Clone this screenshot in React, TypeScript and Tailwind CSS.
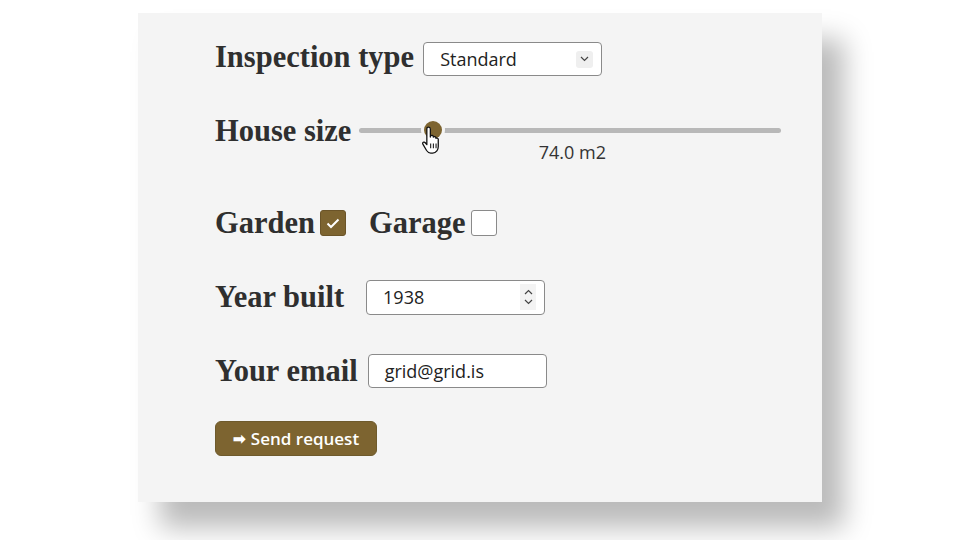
import React from "react";

const serif = { fontFamily: '"Liberation Serif", "DejaVu Serif", serif' };

function Label({ children }: { children: React.ReactNode }) {
  return (
    <span className="text-[30.5px] font-bold text-[#2f2f2f] leading-none whitespace-nowrap" style={serif}>
      {children}
    </span>
  );
}

function HandCursor() {
  return (
    <svg width="21" height="28" viewBox="0 0 18 24" className="absolute left-[-3px] top-[5px]">
      <path
        d="M5 2.5c0-1 .7-1.6 1.5-1.6S8 1.5 8 2.5v7l.3-1.2c.8-.6 2-.3 2.2.6l.1.6c.6-.6 1.9-.4 2.2.5v.6c.6-.5 1.9-.3 2 .8v6.2c0 2.6-1.6 5.6-4.8 5.6H8.3c-1.5 0-2.7-1-3.5-2.2L1.6 15.6c-.6-1 .2-2 1.2-1.7.6.2 1.2.8 2.2 2.1V2.5z"
        fill="#fff"
        stroke="#111"
        strokeWidth="1.1"
        strokeLinejoin="round"
      />
      <path d="M8.3 15v4M10.6 15v4M12.9 15v4" stroke="#111" strokeWidth="0.9" />
    </svg>
  );
}

export default function App() {
  return (
    <div className="w-[960px] h-[540px] bg-white overflow-hidden" style={{ fontFamily: '"Open Sans", "Noto Sans", sans-serif' }}>
      <div className="ml-[138px] mt-[13px] w-[684px] h-[489px] bg-[#f4f4f4] shadow-[22px_26px_26px_rgba(0,0,0,0.27)] pl-[77px] pt-[29px] flex flex-col">
        {/* Inspection type */}
        <div className="flex items-center gap-[9px] h-[34px]">
          <span className="-mt-[3px]">
            <Label>Inspection type</Label>
          </span>
          <div className="w-[179px] h-[34px] border border-[#8a8a8a] rounded-[4px] bg-white flex items-center justify-between pl-[16px] pr-[8px]">
            <span className="text-[18px] text-[#222]">Standard</span>
            <span className="w-[17px] h-[17px] bg-[#efefef] rounded-[3px] flex items-center justify-center">
              <svg width="9" height="6" viewBox="0 0 9 6">
                <path d="M1 1l3.5 3.5L8 1" fill="none" stroke="#444" strokeWidth="1.2" />
              </svg>
            </span>
          </div>
        </div>

        {/* House size */}
        <div className="flex items-start mt-[40px] h-[66px]">
          <Label>House size</Label>
          <div className="ml-[8px] flex flex-col items-center w-[422px] pt-[12px]">
            <div className="relative w-full h-[5px] rounded-full bg-[#b8b8b8]">
              <div className="absolute left-[65px] top-[-7px] w-[18px] h-[18px] rounded-full bg-[#7d6430] shadow-[0_0_0_3px_#f4f4f4]">
                <HandCursor />
              </div>
            </div>
            <span className="mt-[6px] text-[18px] text-[#333] ml-[4px]">74.0 m2</span>
          </div>
        </div>

        {/* Garden / Garage */}
        <div className="flex items-center mt-[26px] h-[30px]">
          <Label>Garden</Label>
          <span className="ml-[5px] w-[26px] h-[26px] rounded-[3px] bg-[#7d6430] border border-[#6b5428] flex items-center justify-center">
            <svg width="14" height="11" viewBox="0 0 14 11">
              <path d="M1.5 5.5l3.5 3.5 7.5-7.5" fill="none" stroke="#fff" strokeWidth="2" />
            </svg>
          </span>
          <span className="ml-[23px]">
            <Label>Garage</Label>
          </span>
          <span className="ml-[5px] w-[26px] h-[26px] rounded-[3px] bg-white border border-[#8a8a8a]" />
        </div>

        {/* Year built */}
        <div className="flex items-center mt-[42px] h-[34px]">
          <Label>Year built</Label>
          <div className="ml-[22px] w-[179px] h-[35px] border border-[#8a8a8a] rounded-[4px] bg-white flex items-center justify-between pl-[16px] pr-[8px]">
            <span className="text-[18px] text-[#222]">1938</span>
            <span className="w-[16px] h-[26px] bg-[#f3f3f3] flex flex-col items-center justify-center gap-[4px]">
              <svg width="9" height="6" viewBox="0 0 9 6">
                <path d="M1 5l3.5-3.5L8 5" fill="none" stroke="#444" strokeWidth="1.2" />
              </svg>
              <svg width="9" height="6" viewBox="0 0 9 6">
                <path d="M1 1l3.5 3.5L8 1" fill="none" stroke="#444" strokeWidth="1.2" />
              </svg>
            </span>
          </div>
        </div>

        {/* Email */}
        <div className="flex items-center mt-[40px] h-[34px]">
          <Label>Your email</Label>
          <div className="ml-[10px] w-[179px] h-[34px] border border-[#8a8a8a] rounded-[4px] bg-white flex items-center pl-[16px]">
            <span className="text-[18px] text-[#222]">grid@grid.is</span>
          </div>
        </div>

        {/* Button */}
        <div className="mt-[33px]">
          <button className="w-[162px] h-[35px] rounded-[6px] bg-[#7d6430] border border-[#6e5a2c] text-white text-[17px] font-semibold flex items-center justify-center gap-[5px]">
            <span className="text-[15px]">➡</span>
            <span>Send request</span>
          </button>
        </div>
      </div>
    </div>
  );
}
